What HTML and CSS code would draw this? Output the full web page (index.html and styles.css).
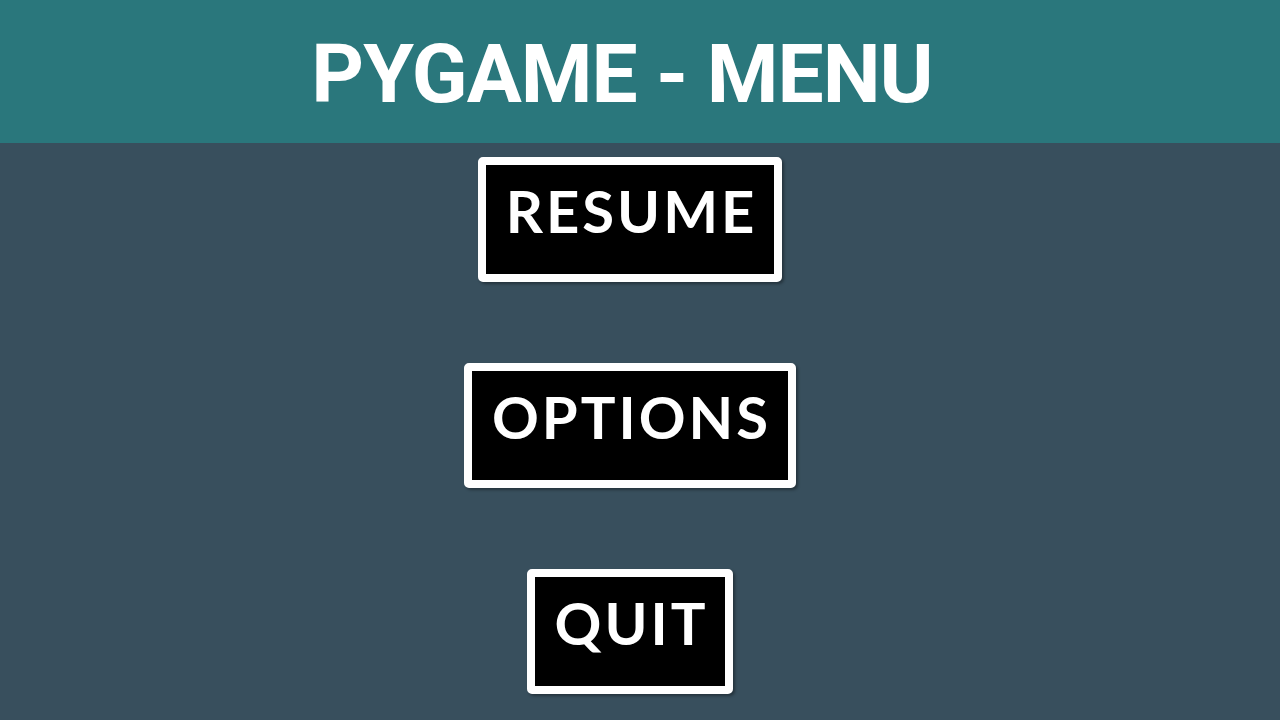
FILE: index.html
```html
<!DOCTYPE html>
<html lang="en">
<head>
    <meta charset="UTF-8">
    <meta name="viewport" content="width=device-width, initial-scale=1.0">
    <title>Pygame - Menu</title>
    <link rel="stylesheet" href="styles.css">
</head>
<body>

    <!-- Title bar -->
    <header class="title-bar">
        <h1>PYGAME - MENU</h1>
    </header>

    <!-- Pause menu buttons -->
    <main class="menu">
        <button class="menu-btn" type="button">RESUME</button>
        <button class="menu-btn" type="button">OPTIONS</button>
        <button class="menu-btn" type="button">QUIT</button>
    </main>

</body>
</html>
```

FILE: styles.css
```css
html, body {
    margin: 0;
    height: 100%;
}
body {
    background-color: #384f5d;
    overflow: hidden;
}

/* Title bar */
.title-bar {
    height: 143px;
    background-color: #2a777c;
    display: flex;
    align-items: center;
    justify-content: center;
    padding-right: 36px;
}
.title-bar h1 {
    margin: 0;
    padding-top: 4px;
    color: #ffffff;
    font-family: Roboto, "Liberation Sans", sans-serif;
    font-weight: 700;
    font-size: 82px;
    letter-spacing: -1px;
    line-height: 1;
}

/* Menu */
.menu {
    display: flex;
    flex-direction: column;
    align-items: center;
    gap: 81px;
    padding-top: 14px;
    padding-right: 20px;
}
.menu-btn {
    box-sizing: border-box;
    height: 125px;
    padding: 0 17px 18px 20px;
    background-color: #000000;
    border: 8px solid #ffffff;
    border-radius: 5px;
    box-shadow: 2px 2px 3px rgba(0, 0, 0, 0.35);
    color: #ffffff;
    font-family: Lato, "DejaVu Sans", sans-serif;
    font-weight: 700;
    font-size: 58px;
    letter-spacing: 3px;
    line-height: 1;
    cursor: pointer;
}
```
